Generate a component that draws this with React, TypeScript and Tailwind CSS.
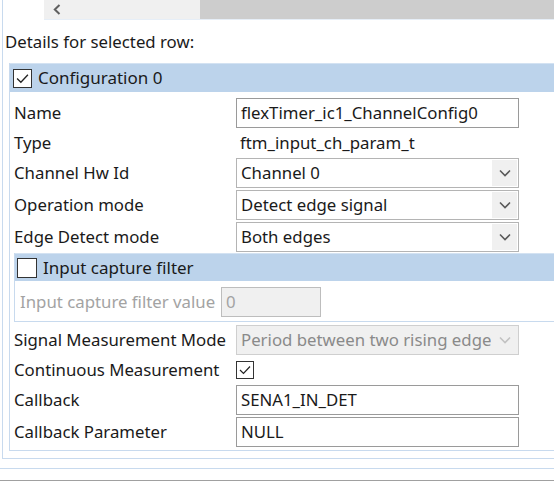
import type { ReactNode } from "react";

function Chevron({ color = "#5a5a5a" }: { color?: string }) {
  return (
    <svg width="12" height="8" viewBox="0 0 12 8" fill="none">
      <polyline points="1,1.5 6,6.5 11,1.5" stroke={color} strokeWidth="1.6" />
    </svg>
  );
}

function Check({ size }: { size: number }) {
  return (
    <svg width={size - 6} height={size - 8} viewBox="0 0 12 10" fill="none">
      <polyline points="1,5 4.5,8.5 11,1.5" stroke="#222" strokeWidth="1.2" />
    </svg>
  );
}

function Checkbox({ checked, size }: { checked: boolean; size: number }) {
  return (
    <span
      className="flex shrink-0 items-center justify-center border border-[#333] bg-white"
      style={{ width: size, height: size }}
    >
      {checked && <Check size={size} />}
    </span>
  );
}

function TextBox({ value }: { value: string }) {
  return (
    <div className="flex h-[30px] items-center border border-[#9a9a9a] bg-white pl-[4px] whitespace-nowrap">
      {value}
    </div>
  );
}

function Select({ value, disabled }: { value: string; disabled?: boolean }) {
  return (
    <div
      className={
        disabled
          ? "flex h-[30px] border border-[#cfcfcf] bg-[#f0f0f0] text-[#8a8a8a]"
          : "flex h-[30px] border border-[#b4b4b4] bg-white"
      }
    >
      <div className="flex min-w-0 flex-1 items-center overflow-hidden pl-[4px] whitespace-nowrap">
        {value}
      </div>
      <div className="m-[1px] flex w-[25px] items-center justify-center bg-[#f0f0f0]">
        <Chevron color={disabled ? "#c2c2c2" : "#5a5a5a"} />
      </div>
    </div>
  );
}

function Row({ label, h = 30, children }: { label: string; h?: number; children: ReactNode }) {
  return (
    <div className="grid grid-cols-[226px_283px] items-center" style={{ height: h }}>
      <span className="pl-[4px] whitespace-nowrap">{label}</span>
      {children}
    </div>
  );
}

function Band({ label, checked, boxSize, boxLeft }: { label: string; checked: boolean; boxSize: number; boxLeft: string }) {
  return (
    <div className={`flex items-center gap-[6px] border-t border-[#d3e2f2] bg-[#bcd3eb] ${boxLeft}`}>
      <Checkbox checked={checked} size={boxSize} />
      <span className="text-[17px]">{label}</span>
    </div>
  );
}

export default function App() {
  return (
    <div className="h-[486px] w-[554px] overflow-hidden bg-white font-['Noto_Sans',sans-serif] text-[16.8px] leading-[20px] text-[#1a1a1a]">
      <div className="ml-[2px] border-b border-l border-[#c8daee] pb-[7px]">
        {/* horizontal scrollbar */}
        <div className="ml-[41px] flex h-[20px] border-b border-[#e6eef7]">
          <div className="flex w-[156px] items-center bg-[#f0f0f0] pl-[9px]">
            <svg width="8" height="11" viewBox="0 0 8 11" fill="none">
              <polyline points="6.5,1 1.8,5.5 6.5,10" stroke="#606060" strokeWidth="2" />
            </svg>
          </div>
          <div className="flex-1 bg-[#cdcdcd]" />
        </div>

        <p className="mt-[12px] pl-[2px]">Details for selected row:</p>

        <div className="ml-[6px] mt-[11px] border-b border-l border-[#c8daee] pb-[3px]">
          <div className="h-[29px] [&>div]:h-[29px]">
            <Band label="Configuration 0" checked boxSize={19} boxLeft="pl-[3px]" />
          </div>

          <div className="mt-[6px] flex flex-col gap-[2px]">
            <Row label="Name">
              <TextBox value="flexTimer_ic1_ChannelConfig0" />
            </Row>
            <Row label="Type" h={26}>
              <span className="pl-[4px]">ftm_input_ch_param_t</span>
            </Row>
            <Row label="Channel Hw Id">
              <Select value="Channel 0" />
            </Row>
            <Row label="Operation mode">
              <Select value="Detect edge signal" />
            </Row>
            <Row label="Edge Detect mode">
              <Select value="Both edges" />
            </Row>
          </div>

          <div className="ml-[4px] mt-[1px] border-b border-l border-[#c8daee] pb-[4px]">
            <div className="h-[28px] [&>div]:h-[28px]">
              <Band label="Input capture filter" checked={false} boxSize={20} boxLeft="pl-[2px]" />
            </div>
            <div className="mt-[6px] grid h-[30px] grid-cols-[206px_100px] items-center">
              <span className="pl-[5px] whitespace-nowrap text-[#a3a3a3]">Input capture filter value</span>
              <div className="flex h-[30px] items-center border border-[#bdbdbd] bg-[#f0f0f0] pl-[4px] text-[#a3a3a3]">
                0
              </div>
            </div>
          </div>

          <div className="mt-[3px] flex flex-col gap-[2px]">
            <Row label="Signal Measurement Mode">
              <Select value="Period between two rising edges" disabled />
            </Row>
            <Row label="Continuous Measurement" h={26}>
              <Checkbox checked size={18} />
            </Row>
            <Row label="Callback">
              <TextBox value="SENA1_IN_DET" />
            </Row>
            <Row label="Callback Parameter">
              <TextBox value="NULL" />
            </Row>
          </div>
        </div>
      </div>

      <div className="mt-[9px] border-t border-[#c8daee]" />
      <div className="mt-[11px] border-t border-[#a0a0a0]" />
    </div>
  );
}
